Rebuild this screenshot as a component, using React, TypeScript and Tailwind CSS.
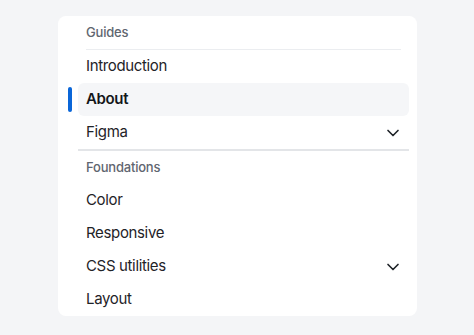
import { ChevronDown } from 'lucide-react';

type Item = { label: string; active?: boolean; expandable?: boolean };

const guides: Item[] = [
  { label: 'Introduction' },
  { label: 'About', active: true },
  { label: 'Figma', expandable: true },
];

const foundations: Item[] = [
  { label: 'Color' },
  { label: 'Responsive' },
  { label: 'CSS utilities', expandable: true },
  { label: 'Layout' },
];

function NavItem({ item }: { item: Item }) {
  return (
    <div className="relative">
      {item.active && (
        <span className="absolute -left-[10px] top-[4px] h-[25px] w-[4px] rounded-full bg-[#0a66d8]"></span>
      )}
      <div
        className={`flex h-[33px] items-center justify-between rounded-[6px] pl-[8px] pr-[6px] text-[15px] tracking-[-0.35px] ${
          item.active ? 'bg-[#f5f6f8] font-semibold text-[#141619]' : 'text-[#1f2328]'
        }`}
      >
        <span>{item.label}</span>
        {item.expandable && <ChevronDown size={20} strokeWidth={2} className="text-[#1f2328]" />}
      </div>
    </div>
  );
}

export default function App() {
  return (
    <main
      className="h-[335px] w-[474px] bg-[#f4f5f7] pl-[58px] pt-[16px]"
      style={{ fontFamily: 'Inter, "Liberation Sans", sans-serif' }}
    >
      <div className="h-[300px] w-[359px] rounded-[8px] bg-white pl-[20px] pr-[8px] pt-[1px]">
        <div className="px-[8px]">
          <div className="flex h-[33px] items-center border-b border-[#ebedf0] text-[13px] font-medium tracking-[-0.2px] text-[#5f6670]">
            Guides
          </div>
        </div>
        {guides.map((item) => (
          <NavItem key={item.label} item={item} />
        ))}
        <div className="h-[2px] bg-[#e3e5e8]"></div>
        <div className="flex h-[33px] items-center px-[8px] text-[13px] font-medium tracking-[-0.2px] text-[#5f6670]">
          Foundations
        </div>
        {foundations.map((item) => (
          <NavItem key={item.label} item={item} />
        ))}
      </div>
    </main>
  );
}
